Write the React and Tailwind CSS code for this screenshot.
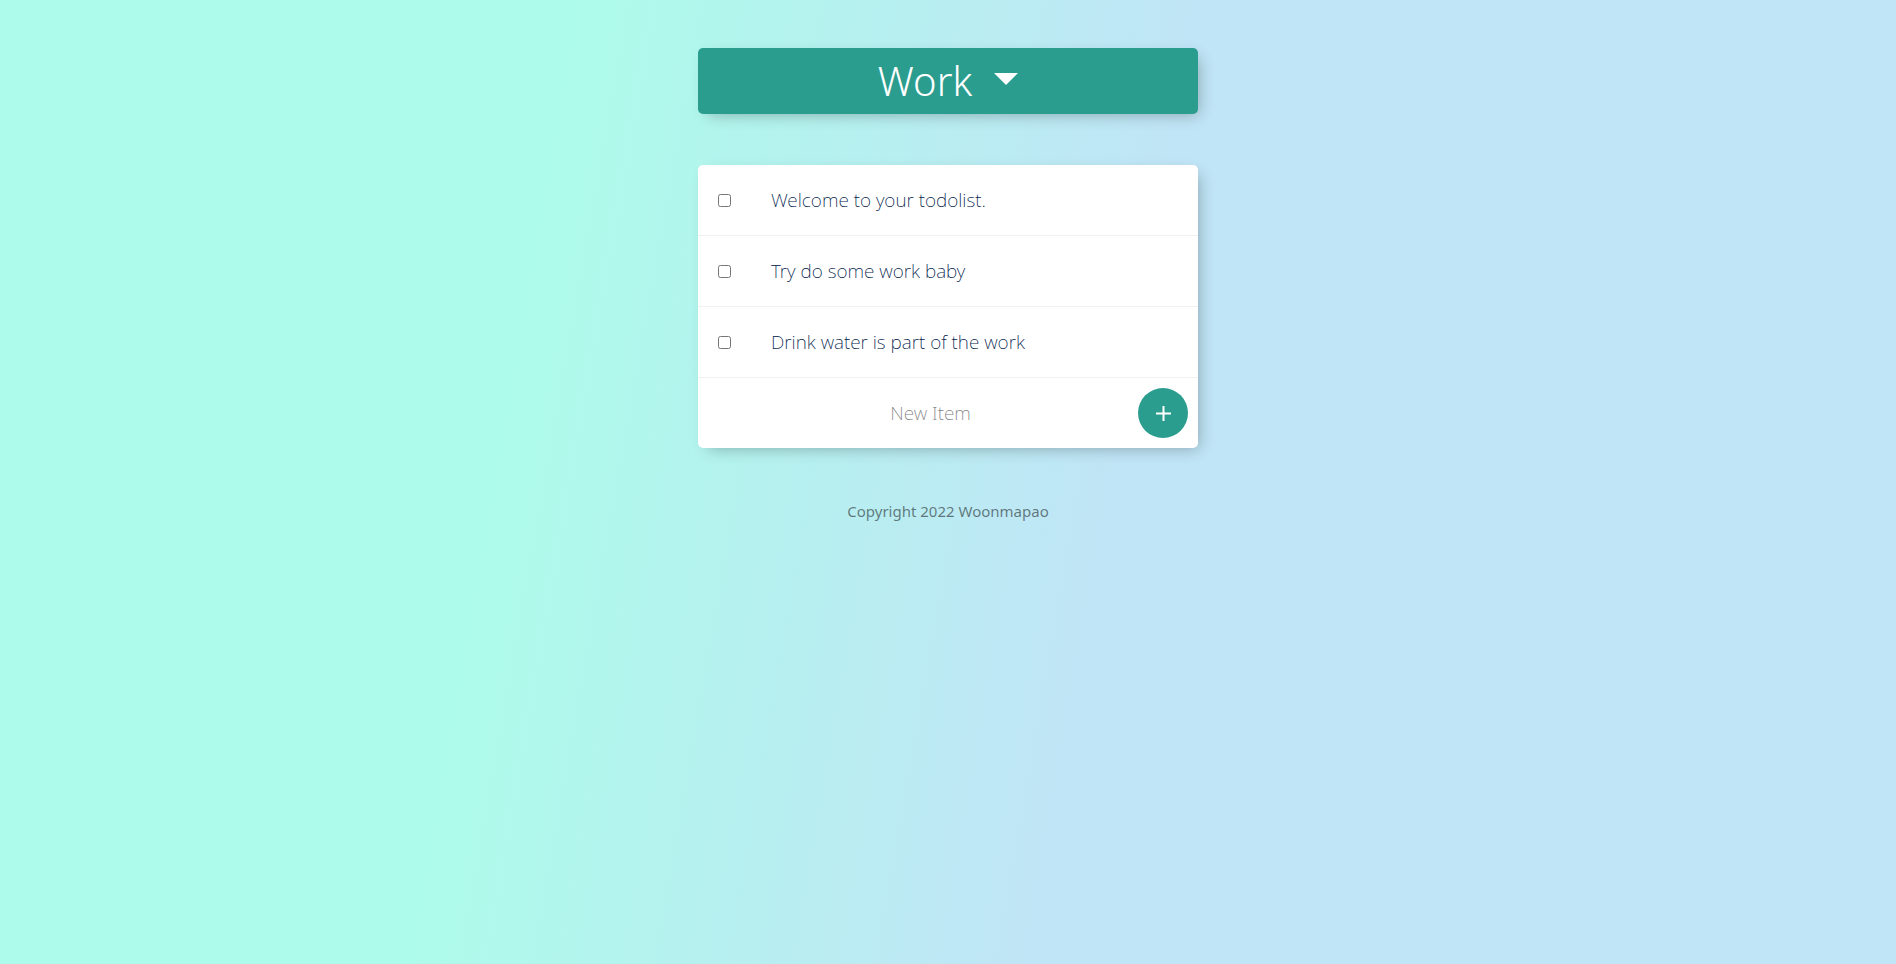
import { useState } from 'react';

const items = [
  { id: 1, name: 'Welcome to your todolist.' },
  { id: 2, name: 'Try do some work baby' },
  { id: 3, name: 'Drink water is part of the work' },
];

export default function App() {
  const [done, setDone] = useState({});
  const [text, setText] = useState('');

  return (
    <div
      className="min-h-screen bg-linear-[100deg] from-[#adfbea] from-28% to-[#c0e5f6] to-58% pt-[48px] pb-10"
      style={{ fontFamily: '"Noto Sans", "Open Sans", sans-serif' }}
    >
      {/* Heading */}
      <div className="mx-auto flex h-[66px] w-[500px] items-center justify-center rounded-[5px] bg-[#2a9d8f] shadow-[5px_5px_15px_-5px_rgba(0,0,0,0.3)]">
        <h1 className="text-[40px] font-light leading-none text-white">Work</h1>
        <svg className="ml-[22px] mt-[-4px]" width="24" height="12" viewBox="0 0 24 12">
          <polygon points="0,0 24,0 12,12" fill="#fff" />
        </svg>
      </div>

      {/* List */}
      <div className="mx-auto mt-[51px] w-[500px] rounded-[5px] bg-white shadow-[5px_5px_15px_-5px_rgba(0,0,0,0.3)]">
        {items.map((item) => (
          <div key={item.id} className="flex min-h-[71px] items-center border-b border-[#f1f1f1]">
            <input
              type="checkbox"
              className="m-[20px] h-[13px] w-[13px]"
              checked={!!done[item.id]}
              onChange={() => setDone({ ...done, [item.id]: !done[item.id] })}
            />
            <p
              className={`px-[20px] text-[19px] font-extralight text-[#00204a] ${
                done[item.id] ? 'line-through decoration-[#2a9d8f]' : ''
              }`}
            >
              {item.name}
            </p>
          </div>
        ))}

        <form
          className="flex h-[70px] items-center justify-center pl-[20px]"
          onSubmit={(e) => e.preventDefault()}
        >
          <input
            type="text"
            value={text}
            onChange={(e) => setText(e.target.value)}
            placeholder="New Item"
            className="h-[60px] w-[405px] text-center text-[19px] font-extralight text-[#00204a] outline-none placeholder:text-[grey] focus:shadow-[inset_0_-3px_0_0_#2a9d8f]"
          />
          <button
            type="submit"
            className="ml-[5px] flex h-[50px] w-[50px] items-center justify-center rounded-full bg-[#2a9d8f]"
          >
            <svg width="15" height="15" viewBox="0 0 15 15">
              <path d="M7.5 0v15M0 7.5h15" stroke="#fff" strokeWidth="2" />
            </svg>
          </button>
        </form>
      </div>

      <footer className="mt-[52px] text-center text-[15px] text-black/50">Copyright 2022 Woonmapao</footer>
    </div>
  );
}
